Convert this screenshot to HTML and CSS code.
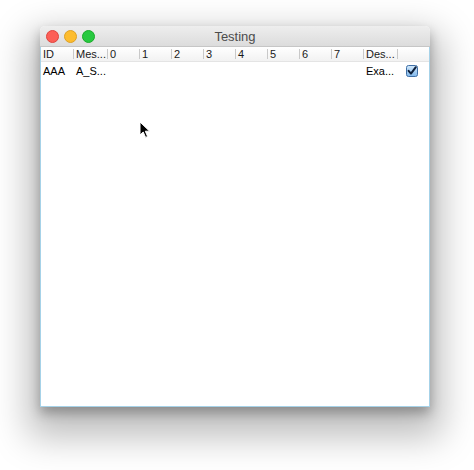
FILE: index.html
```html
<!DOCTYPE html>
<html>
<head>
<meta charset="utf-8">
<link rel="stylesheet" href="styles.css">
</head>
<body>
<div class="window">
  <div class="titlebar">
    <div class="lights">
      <span class="light red"></span>
      <span class="light yellow"></span>
      <span class="light green"></span>
    </div>
    <div class="title">Testing</div>
  </div>
  <div class="content">
    <div class="grid header">
      <div class="hc first">ID</div>
      <div class="hc">Mes...</div>
      <div class="hc">0</div>
      <div class="hc">1</div>
      <div class="hc">2</div>
      <div class="hc">3</div>
      <div class="hc">4</div>
      <div class="hc">5</div>
      <div class="hc">6</div>
      <div class="hc">7</div>
      <div class="hc">Des...</div>
      <div class="hc"></div>
    </div>
    <div class="grid row">
      <div class="c">AAA</div>
      <div class="c">A_S...</div>
      <div class="c"></div>
      <div class="c"></div>
      <div class="c"></div>
      <div class="c"></div>
      <div class="c"></div>
      <div class="c"></div>
      <div class="c"></div>
      <div class="c"></div>
      <div class="c">Exa...</div>
      <div class="c check">
        <svg width="12" height="12" viewBox="0 0 12 12">
          <defs>
            <linearGradient id="cb" x1="0" y1="0" x2="0" y2="1">
              <stop offset="0" stop-color="#d3e9fb"/>
              <stop offset="1" stop-color="#7fb6ea"/>
            </linearGradient>
          </defs>
          <rect x="0.5" y="0.5" width="11" height="11" rx="2" fill="url(#cb)" stroke="#3f6fa6"/>
          <path d="M2.6 5.8 L5 8.6 L9.8 2.2" fill="none" stroke="#0d1f3a" stroke-width="2" stroke-linecap="round" stroke-linejoin="round"/>
        </svg>
      </div>
    </div>
  </div>
</div>
<svg class="cursor" width="12" height="18" viewBox="0 0 12 18">
  <path d="M1 1 L1 14 L4.2 11 L6.6 16.4 L8.6 15.5 L6.3 10.2 L10.6 10.2 Z" fill="#000" stroke="#fff" stroke-width="1"/>
</svg>
</body>
</html>
```
FILE: styles.css
```css
html, body {
  margin: 0;
  padding: 0;
  background: #ffffff;
}
body {
  width: 474px;
  height: 470px;
  overflow: hidden;
  position: relative;
  font-family: "Liberation Sans", Arial, sans-serif;
}
.window {
  margin: 26px 0 0 40px;
  width: 390px;
  height: 381px;
  display: flex;
  flex-direction: column;
  border-radius: 5px 5px 0 0;
  box-shadow: 0 18px 36px 12px rgba(0,0,0,0.26), 0 6px 12px rgba(0,0,0,0.28);
  background: #fff;
}
.titlebar {
  height: 20px;
  position: relative;
  display: flex;
  align-items: center;
  border-radius: 5px 5px 0 0;
  background: linear-gradient(#eeeeee, #dcdcdc);
  border-bottom: 1px solid #c6c6c6;
}
.lights {
  display: flex;
  gap: 5px;
  padding-left: 6px;
  padding-top: 1px;
}
.light {
  width: 11px;
  height: 11px;
  border-radius: 50%;
  display: block;
}
.red { background: #fc5f57; border: 0.5px solid #e0443e; }
.yellow { background: #fdbc2e; border: 0.5px solid #dea123; }
.green { background: #28c940; border: 0.5px solid #1aab29; }
.title {
  position: absolute;
  left: 0;
  right: 0;
  top: 3px;
  text-align: center;
  font-size: 13px;
  color: #4c4c4c;
}
.content {
  flex: 1;
  border: 1px solid #a6d2e8;
  border-top: none;
  background: #fff;
}
.grid {
  display: grid;
  grid-template-columns: 32px 34px repeat(8, 32px) 34px 1fr;
}
.header {
  height: 14px;
  background: linear-gradient(#ffffff, #f2f2f2);
  border-bottom: 1px solid #e4e4e4;
}
.hc {
  font-size: 11px;
  color: #1a1a1a;
  line-height: 14px;
  padding-left: 3px;
  position: relative;
  white-space: nowrap;
  overflow: hidden;
}
.hc::before {
  content: "";
  position: absolute;
  left: 0;
  top: 2px;
  height: 10px;
  border-left: 1px solid #c9c9c9;
}
.hc.first { padding-left: 2px; }
.hc.first::before { display: none; }
.row {
  height: 16px;
  margin-top: 1px;
}
.c {
  font-size: 11px;
  color: #000;
  line-height: 16px;
  padding-left: 2px;
  white-space: nowrap;
}
.c:nth-child(2), .c:nth-child(11) { padding-left: 3px; }
.check {
  display: flex;
  align-items: center;
  padding-left: 9px;
}
.check svg { display: block; }
.cursor {
  position: absolute;
  left: 139px;
  top: 121px;
}
```
